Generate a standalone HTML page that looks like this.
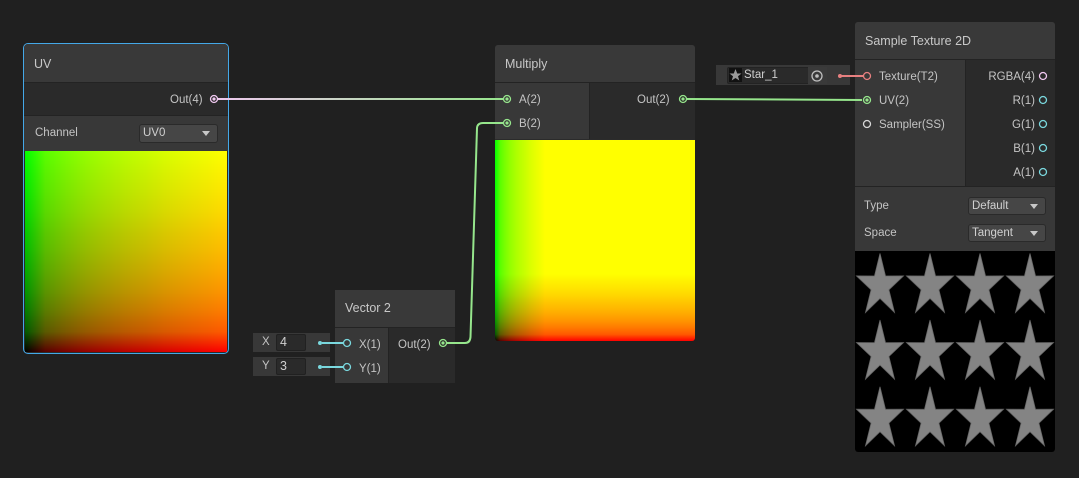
<!DOCTYPE html><html><head><style>
*{margin:0;padding:0;box-sizing:border-box}
body{width:1079px;height:478px;background:#202020;position:relative;overflow:hidden;font-family:"Liberation Sans",sans-serif;font-size:11.5px;color:#c4c4c4}
.a{position:absolute}
.title{background:#393939;font-size:12.5px;color:#c8c8c8;padding-left:10px}
.dd{position:absolute;background:#464646;border:1px solid #2a2a2a;border-radius:3px;color:#d0d0d0;padding-left:3px;font-size:11.5px}
.dd:after{content:"";position:absolute;right:7px;top:6px;border:4px solid transparent;border-top:5px solid #c8c8c8;border-bottom:0}
</style></head><body>

<!-- UV node -->
<div class="a" style="left:23px;top:43px;width:206px;height:311px;border:1px solid #44a8e8;border-radius:5px;background:#2b2b2b;overflow:hidden">
 <div class="title a" style="left:0;top:0;width:204px;height:38px;line-height:40px">UV</div>
 <div class="a" style="left:0;top:38px;width:204px;height:34px;background:#2a2a2a;border-top:1px solid #232323;border-bottom:1px solid #232323"></div>
 <div class="a" style="left:146px;top:50px">Out(4)</div>
 <div class="a" style="left:0;top:72px;width:204px;height:35px;background:#383838"></div>
 <div class="a" style="left:11px;top:83px">Channel</div>
 <div class="dd" style="left:115px;top:80px;width:79px;height:19px;line-height:17px">UV0</div>
 <div class="a" style="left:1px;top:107px;width:202px;height:201px;background:linear-gradient(to right,#000,#590000 10%,#7a0000 20%,#940000 30%,#a80000 40%,#ba0000 50%,#c90000 60%,#d90000 70%,#e60000 80%,#f20000 90%,#f00)">
  <div style="position:absolute;inset:0;background:linear-gradient(to top,#000,#005900 10%,#007a00 20%,#009400 30%,#00a800 40%,#00ba00 50%,#00c900 60%,#00d900 70%,#00e600 80%,#00f200 90%,#0f0);mix-blend-mode:screen"></div>
 </div>
</div>

<!-- Multiply -->
<div class="a" style="left:495px;top:45px;width:200px;height:296px;background:#2b2b2b;border-radius:3px;overflow:hidden">
 <div class="title a" style="left:0;top:0;width:200px;height:37px;line-height:38px">Multiply</div>
 <div class="a" style="left:0;top:37px;width:94px;height:57px;background:#383838;border-top:1px solid #232323"></div>
 <div class="a" style="left:94px;top:37px;width:106px;height:57px;background:#2a2a2a;border-top:1px solid #232323;border-left:1px solid #232323"></div>
 <div class="a" style="left:24px;top:49px">A(2)</div>
 <div class="a" style="left:24px;top:73px">B(2)</div>
 <div class="a" style="left:142px;top:49px">Out(2)</div>
 <div class="a" style="left:0;top:95px;width:200px;height:201px;background:linear-gradient(to right,#000,#590000 2.5%,#7a0000 5%,#940000 7.5%,#a80000 10%,#ba0000 12.5%,#c90000 15%,#d90000 17.5%,#e60000 20%,#f20000 22.5%,#f00 25%,#f00)">
  <div style="position:absolute;inset:0;background:linear-gradient(to top,#000,#005900 3.3%,#007a00 6.7%,#009400 10%,#00a800 13.3%,#00ba00 16.7%,#00c900 20%,#00d900 23.3%,#00e600 26.7%,#00f200 30%,#0f0 33.3%,#0f0);mix-blend-mode:screen"></div>
 </div>
</div>

<!-- Vector 2 -->
<div class="a" style="left:335px;top:290px;width:120px;height:93px;background:#2b2b2b;overflow:hidden">
 <div class="title a" style="left:0;top:0;width:120px;height:37px;line-height:36px">Vector 2</div>
 <div class="a" style="left:0;top:37px;width:53px;height:56px;background:#383838;border-top:1px solid #232323"></div>
 <div class="a" style="left:53px;top:37px;width:67px;height:56px;background:#2a2a2a;border-top:1px solid #232323;border-left:1px solid #232323"></div>
 <div class="a" style="left:24px;top:49px">X(1)</div>
 <div class="a" style="left:24px;top:73px">Y(1)</div>
 <div class="a" style="left:63px;top:49px">Out(2)</div>
</div>
<div class="a" style="left:253px;top:333px;width:77px;height:19px;background:#383838"></div>
<div class="a" style="left:253px;top:357px;width:77px;height:19px;background:#383838"></div>
<div class="a" style="left:262px;top:336px">X</div>
<div class="a" style="left:262px;top:360px">Y</div>
<div class="a" style="left:276px;top:334px;width:30px;height:17px;background:#2a2a2a;border:1px solid #212121;border-radius:2px;color:#d0d0d0;padding-left:3px;line-height:15px;font-size:12.5px">4</div>
<div class="a" style="left:276px;top:358px;width:30px;height:17px;background:#2a2a2a;border:1px solid #212121;border-radius:2px;color:#d0d0d0;padding-left:3px;line-height:15px;font-size:12.5px">3</div>

<!-- Star field -->
<div class="a" style="left:716px;top:65px;width:134px;height:20px;background:#383838"></div>
<div class="a" style="left:727px;top:67px;width:100px;height:17px;background:#2a2a2a;border:1px solid #232323;border-radius:2px"></div>
<div class="a" style="left:808px;top:67px;width:19px;height:17px;background:#3a3a3a"></div>
<div class="a" style="left:744px;top:69px;color:#d0d0d0">Star_1</div>

<!-- Sample Texture 2D -->
<div class="a" style="left:855px;top:22px;width:200px;height:430px;background:#2b2b2b;border-radius:3px;overflow:hidden">
 <div class="title a" style="left:0;top:0;width:200px;height:37px;line-height:38px">Sample Texture 2D</div>
 <div class="a" style="left:0;top:37px;width:110px;height:127px;background:#383838;border-top:1px solid #232323"></div>
 <div class="a" style="left:110px;top:37px;width:90px;height:127px;background:#2a2a2a;border-top:1px solid #232323;border-left:1px solid #232323"></div>
 <div class="a" style="left:24px;top:49px">Texture(T2)</div>
 <div class="a" style="left:24px;top:73px">UV(2)</div>
 <div class="a" style="left:24px;top:97px">Sampler(SS)</div>
 <div class="a" style="left:104px;top:49px;width:76px;text-align:right">RGBA(4)</div>
 <div class="a" style="left:104px;top:73px;width:76px;text-align:right">R(1)</div>
 <div class="a" style="left:104px;top:97px;width:76px;text-align:right">G(1)</div>
 <div class="a" style="left:104px;top:121px;width:76px;text-align:right">B(1)</div>
 <div class="a" style="left:104px;top:145px;width:76px;text-align:right">A(1)</div>
 <div class="a" style="left:0;top:164px;width:200px;height:65px;background:#383838;border-top:1px solid #232323"></div>
 <div class="a" style="left:9px;top:178px">Type</div>
 <div class="a" style="left:9px;top:205px">Space</div>
 <div class="dd" style="left:113px;top:175px;width:78px;height:18px;line-height:16px">Default</div>
 <div class="dd" style="left:113px;top:202px;width:78px;height:18px;line-height:16px">Tangent</div>
 <svg class="a" style="left:0;top:229px" width="200" height="201">
  <defs><pattern id="st" width="50" height="66.67" patternUnits="userSpaceOnUse"><polygon points="25,1.4 30.5,24 48.5,23.9 33.9,37.8 39.5,60.4 25,46.4 10.5,60.4 16.1,37.8 1.5,23.9 19.5,24" fill="#848484" stroke="#6a6a6a" stroke-width="0.8" transform="translate(0,1)"/></pattern></defs>
  <rect width="200" height="201" fill="#000"/><rect width="200" height="201" fill="url(#st)"/>
 </svg>
</div>

<!-- wires and ports -->
<svg class="a" style="left:0;top:0" width="1079" height="478">
 <defs><linearGradient id="pg" x1="214" x2="507" gradientUnits="userSpaceOnUse"><stop offset="0" stop-color="#f0c8f0"/><stop offset="1" stop-color="#96e68c"/></linearGradient></defs>
 <line x1="218" y1="99" x2="503" y2="99" stroke="url(#pg)" stroke-width="2"/>
 <path d="M447 343 H465 Q470 343 470.5 337 L477 128 Q477.5 123 483 123 H503" fill="none" stroke="#96e68c" stroke-width="2"/>
 <line x1="687" y1="99" x2="862" y2="100" stroke="#96e68c" stroke-width="2"/>
 <line x1="322" y1="343" x2="343" y2="343" stroke="#7ad8de" stroke-width="2"/>
 <line x1="322" y1="367" x2="343" y2="367" stroke="#7ad8de" stroke-width="2"/>
 <line x1="841" y1="76" x2="863" y2="76" stroke="#e88080" stroke-width="2"/>
 <g fill="none" stroke-width="1.3">
  <circle cx="214" cy="99" r="3.5" stroke="#f0c8f0"/><circle cx="214" cy="99" r="1.6" fill="#f0c8f0"/>
  <circle cx="507" cy="99" r="3.5" stroke="#96e68c"/><circle cx="507" cy="99" r="1.6" fill="#96e68c"/>
  <circle cx="507" cy="123" r="3.5" stroke="#96e68c"/><circle cx="507" cy="123" r="1.6" fill="#96e68c"/>
  <circle cx="683" cy="99" r="3.5" stroke="#96e68c"/><circle cx="683" cy="99" r="1.6" fill="#96e68c"/>
  <circle cx="443" cy="343" r="3.5" stroke="#96e68c"/><circle cx="443" cy="343" r="1.6" fill="#96e68c"/>
  <circle cx="347" cy="343" r="3.5" stroke="#7ad8de"/>
  <circle cx="347" cy="367" r="3.5" stroke="#7ad8de"/>
  <circle cx="320" cy="343" r="2" fill="#7ad8de" stroke="none"/>
  <circle cx="320" cy="367" r="2" fill="#7ad8de" stroke="none"/>
  <circle cx="867" cy="76" r="3.5" stroke="#e88080"/>
  <circle cx="840" cy="76" r="2" fill="#e88080" stroke="none"/>
  <circle cx="867" cy="100" r="3.5" stroke="#96e68c"/><circle cx="867" cy="100" r="1.6" fill="#96e68c"/>
  <circle cx="867" cy="124" r="3.5" stroke="#d8d8d8"/>
  <circle cx="1043" cy="76" r="3.5" stroke="#f0c8f0"/>
  <circle cx="1043" cy="100" r="3.5" stroke="#7ad8de"/>
  <circle cx="1043" cy="124" r="3.5" stroke="#7ad8de"/>
  <circle cx="1043" cy="148" r="3.5" stroke="#7ad8de"/>
  <circle cx="1043" cy="172" r="3.5" stroke="#7ad8de"/>
  <circle cx="817" cy="76" r="5" stroke="#c0c0c0"/><circle cx="817" cy="76" r="1.8" fill="#c0c0c0"/>
 </g>
 <rect x="729" y="68" width="13" height="14" fill="#111"/>
 <polygon points="735.5,69 737.2,73.5 741.5,73.5 738,76.2 739.3,80.5 735.5,78 731.7,80.5 733,76.2 729.5,73.5 733.8,73.5" fill="#9a9a9a"/>
</svg>
</body></html>
